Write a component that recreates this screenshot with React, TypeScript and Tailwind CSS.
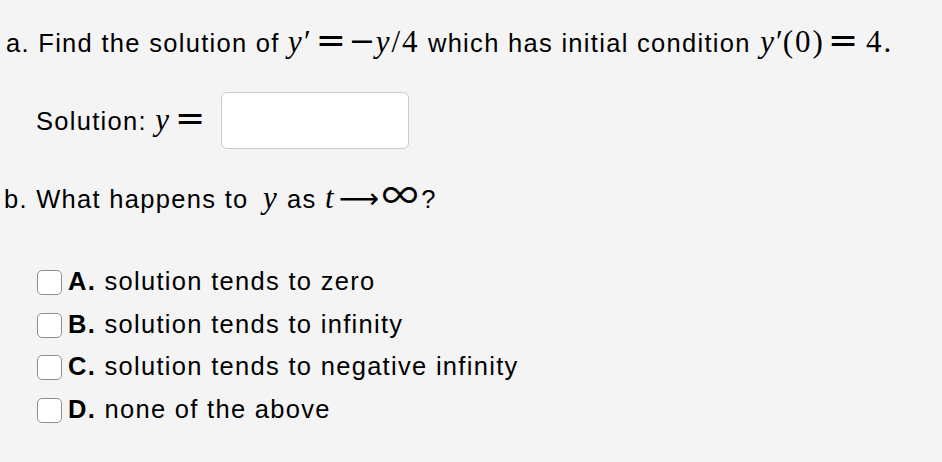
import React from "react";

const math = "font-['Liberation_Serif',serif] text-[31px] leading-[0] tracking-[2px]";
const op = "font-['DejaVu_Sans',sans-serif] leading-[0] tracking-normal";

function V({ children }: { children: React.ReactNode }) {
  return <span className="italic">{children}</span>;
}

function Prime() {
  return <span className="tracking-normal">′</span>;
}

function Eq({ className = "" }: { className?: string }) {
  return <span className={`${op} text-[36px] ${className}`}>=</span>;
}

function Option({ letter, text }: { letter: string; text: string }) {
  return (
    <label className="flex h-[30px] items-start gap-[6px]">
      <span className="mt-[4px] block h-[25px] w-[25px] shrink-0 rounded-[5px] border-[1.5px] border-[#8e8e8e] bg-white" />
      <span>
        <b className="font-bold">{letter}.</b> {text}
      </span>
    </label>
  );
}

export default function App() {
  return (
    <div className="min-h-screen bg-[#f4f4f4] font-['Liberation_Sans',Arial,sans-serif] text-[25.5px] leading-[30px] tracking-[1.3px] text-black">
      <p className="pl-[6px] pt-[28px] whitespace-nowrap">
        a. Find the solution of{" "}
        <span className={math}>
          <V>y</V>
          <Prime />
          <Eq className="ml-[5px] mr-[3px]" />
          <span className={`${op} text-[32px]`}>−</span>
          <V>y</V>/4
        </span>{" "}
        which has initial condition{" "}
        <span className={`${math} ml-[1px]`}>
          <V>y</V>
          <Prime />
          (0)
          <Eq className="ml-[3px] mr-[4px]" />
          <span className="ml-[4px]">4.</span>
        </span>
      </p>

      <div className="mt-[34px] flex h-[57px] items-center pl-[36px]">
        <span>
          Solution:{" "}
          <span className={math}>
            <V>y</V>
            <Eq className="ml-[4px]" />
          </span>
        </span>
        <input
          type="text"
          aria-label="solution"
          className="ml-[16px] h-[57px] w-[188px] rounded-[6px] border-[1.5px] border-[#cacaca] bg-white outline-none"
        />
      </div>

      <p className="mt-[35px] pl-[4px]">
        b. What happens to <span className={`${math} ml-[6px]`}><V>y</V></span> as{" "}
        <span className={math}>
          <V>t</V>
          <span className={`${op} ml-[3px] mr-[2px] text-[28px]`}>⟶</span>
          <span className="font-['Inter',sans-serif] text-[42px] font-light">∞</span>
        </span>
        ?
      </p>

      <div className="mt-[52px] flex flex-col gap-[12.5px] pl-[37px]">
        <Option letter="A" text="solution tends to zero" />
        <Option letter="B" text="solution tends to infinity" />
        <Option letter="C" text="solution tends to negative infinity" />
        <Option letter="D" text="none of the above" />
      </div>
    </div>
  );
}
